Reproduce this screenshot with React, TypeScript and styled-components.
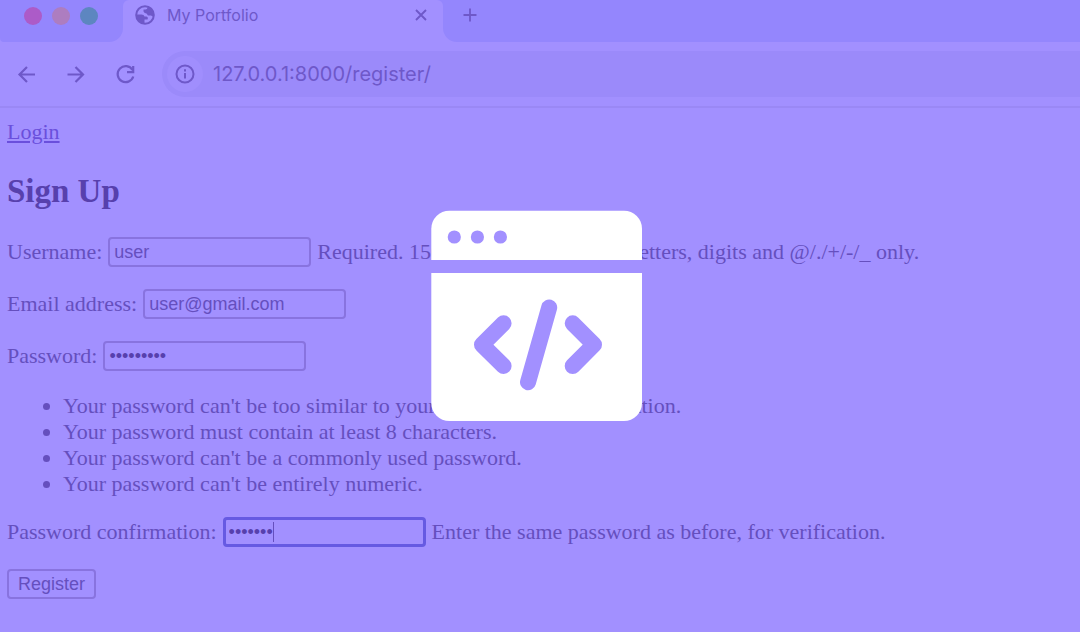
import React from "react";
import styled, { createGlobalStyle } from "styled-components";

const color = {
  page: "#a290ff",
  strip: "#9486fd",
  field: "#9b8afa",
  chip: "#a08efd",
  line: "#9a88f5",
  chrome: "#6e58c9",
  text: "#654fbe",
  heading: "#5740ad",
  link: "#6a4fdc",
  border: "#8873df",
  focus: "#665ae2",
};

const Global = createGlobalStyle`
  * { box-sizing: border-box; }
  body {
    margin: 0;
    background: ${color.page};
    color: ${color.text};
    font-family: "Liberation Serif", "Times New Roman", serif;
    font-size: 22px;
    line-height: 26px;
  }
`;

const Window = styled.div`
  position: relative;
  min-height: 100vh;
  overflow: hidden;
`;

const TabStrip = styled.div`
  display: flex;
  height: 42px;
  color: ${color.chrome};
  font-family: Inter, "Liberation Sans", sans-serif;
`;

const WindowControls = styled.div`
  display: flex;
  gap: 10px;
  width: 123px;
  padding: 7px 0 0 24px;
  background: ${color.strip};
  border-radius: 0 0 14px 4px;
`;

const Light = styled.span<{ $fill: string }>`
  width: 18px;
  height: 18px;
  border-radius: 50%;
  background: ${(p) => p.$fill};
`;

const TabSlot = styled.div`
  width: 320px;
  background: ${color.strip};
`;

const Tab = styled.div`
  display: flex;
  align-items: center;
  height: 42px;
  padding: 0 14px 12px 11px;
  background: ${color.page};
  border-radius: 6px 6px 0 0;
`;

const TabTitle = styled.span`
  flex: 1;
  padding-left: 11px;
  font-size: 16px;
  line-height: 20px;
`;

const StripRest = styled.div`
  flex: 1;
  padding: 6px 0 0 18px;
  background: ${color.strip};
  border-radius: 0 0 0 14px;
`;

const IconButton = styled.button`
  display: flex;
  align-items: center;
  justify-content: center;
  padding: 0;
  border: 0;
  background: none;
  color: inherit;
`;

const Toolbar = styled.div`
  display: flex;
  align-items: center;
  gap: 25px;
  height: 66px;
  padding-left: 15px;
  border-bottom: 2px solid ${color.line};
  color: ${color.chrome};
`;

const AddressBar = styled.div`
  display: flex;
  align-items: center;
  flex: 1;
  gap: 10px;
  height: 46px;
  padding-left: 5px;
  background: ${color.field};
  border-radius: 23px 0 0 23px;
`;

const InfoChip = styled(IconButton)`
  width: 36px;
  height: 36px;
  border-radius: 50%;
  background: ${color.chip};
`;

const Address = styled.input`
  flex: 1;
  padding: 0;
  border: 0;
  outline: 0;
  background: none;
  color: inherit;
  font-family: Inter, "Liberation Sans", sans-serif;
  font-size: 20px;
  line-height: 24px;
`;

const Content = styled.main`
  padding: 11px 7px;
`;

const LoginLink = styled.a`
  display: block;
  width: fit-content;
  color: ${color.link};
`;

const Title = styled.h2`
  margin: 24px 0;
  color: ${color.heading};
  font-size: 33px;
  line-height: 44px;
`;

const Row = styled.div`
  display: flex;
  align-items: center;
  gap: 6px;
  height: 30px;
  margin-bottom: 22px;
  white-space: nowrap;
`;

const FieldBox = styled.span`
  position: relative;
  display: flex;
`;

const Field = styled.input<{ $active?: boolean }>`
  width: 203px;
  height: 30px;
  padding: 0 ${(p) => (p.$active ? 3 : 4)}px;
  border: ${(p) => (p.$active ? `3px solid ${color.focus}` : `2px solid ${color.border}`)};
  border-radius: 4px;
  outline: 0;
  background: none;
  color: ${(p) => (p.type === "password" ? color.heading : color.text)};
  font-family: "Liberation Sans", Arial, sans-serif;
  font-size: 18px;
`;

const Caret = styled.span`
  position: absolute;
  left: 50px;
  top: 5px;
  width: 1px;
  height: 20px;
  background: ${color.text};
`;

const Rules = styled.ul`
  margin: 0 0 20px;
  padding-left: 56px;
`;

const Submit = styled.button`
  height: 30px;
  padding: 0 9px;
  border: 2px solid ${color.border};
  border-radius: 4px;
  background: none;
  color: ${color.text};
  font-family: "Liberation Sans", Arial, sans-serif;
  font-size: 18px;
  line-height: 24px;
`;

const Overlay = styled.div`
  position: absolute;
  inset: 0;
  display: flex;
  align-items: center;
  justify-content: center;
  pointer-events: none;
`;

const Globe = () => (
  <svg width="22" height="22" viewBox="0 0 22 22" fill="none">
    <circle cx="11" cy="11" r="8.800" stroke="currentColor" strokeWidth="2" />
    <path
      d="M2 10.500H7.500Q10 10.500 10.500 12.500H12.500Q14.500 13 13.500 15.500H10.500V19.800C5.500 19.500 2 15.500 2 10.500ZM13.500 2.300V3.500Q13.500 5.500 11.500 5.500H9.500V7.500Q10.500 9.500 12.500 9.500L14 11.500H17L19.800 13C20.600 8 18 3.800 13.500 2.300Z"
      fill="currentColor"
    />
  </svg>
);

const Close = () => (
  <svg width="16" height="16" viewBox="0 0 16 16" stroke="currentColor" strokeWidth="1.900">
    <path d="M3 3L13 13M13 3L3 13" />
  </svg>
);

const Plus = () => (
  <svg width="18" height="18" viewBox="0 0 18 18" stroke="currentColor" strokeWidth="1.800">
    <path d="M9 2.500V15.500M2.500 9H15.500" />
  </svg>
);

const Arrow = ({ forward = false }: { forward?: boolean }) => (
  <svg width="24" height="24" viewBox="0 0 24 24" fill="none" stroke="currentColor" strokeWidth="2.200">
    <path d={forward ? "M3.500 12.500H19M11.500 5L19 12.500L11.500 20" : "M20 12.500H4.500M12 5L4.500 12.500L12 20"} />
  </svg>
);

const Reload = () => (
  <svg width="24" height="24" viewBox="0 0 24 24" fill="none" stroke="currentColor" strokeWidth="2.200">
    <path d="M19.500 8A8 8 0 1 0 20.300 14.500" />
    <path d="M20.200 4V10.200H14" />
  </svg>
);

const Info = () => (
  <svg width="22" height="22" viewBox="0 0 22 22" fill="none" stroke="currentColor" strokeWidth="2">
    <circle cx="11" cy="11" r="8.500" />
    <path d="M11 10V15.500M11 6.300V8.500" />
  </svg>
);

const CodeWindow = () => (
  <svg width="218" height="212" viewBox="431 210 218 212" fill="none">
    <path d="M431.300 260V228.700A18 18 0 0 1 449.300 210.700H624A18 18 0 0 1 642 228.700V260Z" fill="#fff" />
    <path d="M431.300 273H642V403A18 18 0 0 1 624 421H449.300A18 18 0 0 1 431.300 403Z" fill="#fff" />
    <g fill={color.page}>
      <circle cx="454.300" cy="237" r="6.600" />
      <circle cx="477.400" cy="237" r="6.600" />
      <circle cx="500.400" cy="237" r="6.600" />
    </g>
    <path
      d="M503.600 323.300L482 344.700L503.600 366M549.200 307.500L528 382.200M572.700 323.300L594 344.700L572.700 366"
      stroke={color.page}
      strokeWidth="16"
      strokeLinecap="round"
      strokeLinejoin="round"
    />
  </svg>
);

export default function App() {
  return (
    <Window>
      <Global />
      <TabStrip>
        <WindowControls>
          <Light $fill="#ac5bc8" />
          <Light $fill="#ad7dc0" />
          <Light $fill="#5d86c0" />
        </WindowControls>
        <TabSlot>
          <Tab>
            <Globe />
            <TabTitle>My Portfolio</TabTitle>
            <IconButton aria-label="Close tab"><Close /></IconButton>
          </Tab>
        </TabSlot>
        <StripRest>
          <IconButton aria-label="New tab"><Plus /></IconButton>
        </StripRest>
      </TabStrip>
      <Toolbar>
        <IconButton aria-label="Back"><Arrow /></IconButton>
        <IconButton aria-label="Forward"><Arrow forward /></IconButton>
        <IconButton aria-label="Reload"><Reload /></IconButton>
        <AddressBar>
          <InfoChip aria-label="Site information"><Info /></InfoChip>
          <Address aria-label="Address" defaultValue="127.0.0.1:8000/register/" />
        </AddressBar>
      </Toolbar>
      <Content>
        <LoginLink href="#login">Login</LoginLink>
        <Title>Sign Up</Title>
        <form>
          <Row>
            <label htmlFor="username">Username:</label>
            <Field id="username" defaultValue="user" />
            <span>Required. 150 characters or fewer. Letters, digits and @/./+/-/_ only.</span>
          </Row>
          <Row>
            <label htmlFor="email">Email address:</label>
            <Field id="email" type="email" defaultValue="user@gmail.com" />
          </Row>
          <Row>
            <label htmlFor="password">Password:</label>
            <Field id="password" type="password" defaultValue="portfolio" />
          </Row>
          <Rules>
            <li>Your password can't be too similar to your other personal information.</li>
            <li>Your password must contain at least 8 characters.</li>
            <li>Your password can't be a commonly used password.</li>
            <li>Your password can't be entirely numeric.</li>
          </Rules>
          <Row>
            <label htmlFor="confirm">Password confirmation:</label>
            <FieldBox>
              <Field id="confirm" type="password" defaultValue="portfol" $active />
              <Caret />
            </FieldBox>
            <span>Enter the same password as before, for verification.</span>
          </Row>
          <Submit type="button">Register</Submit>
        </form>
      </Content>
      <Overlay>
        <CodeWindow />
      </Overlay>
    </Window>
  );
}
